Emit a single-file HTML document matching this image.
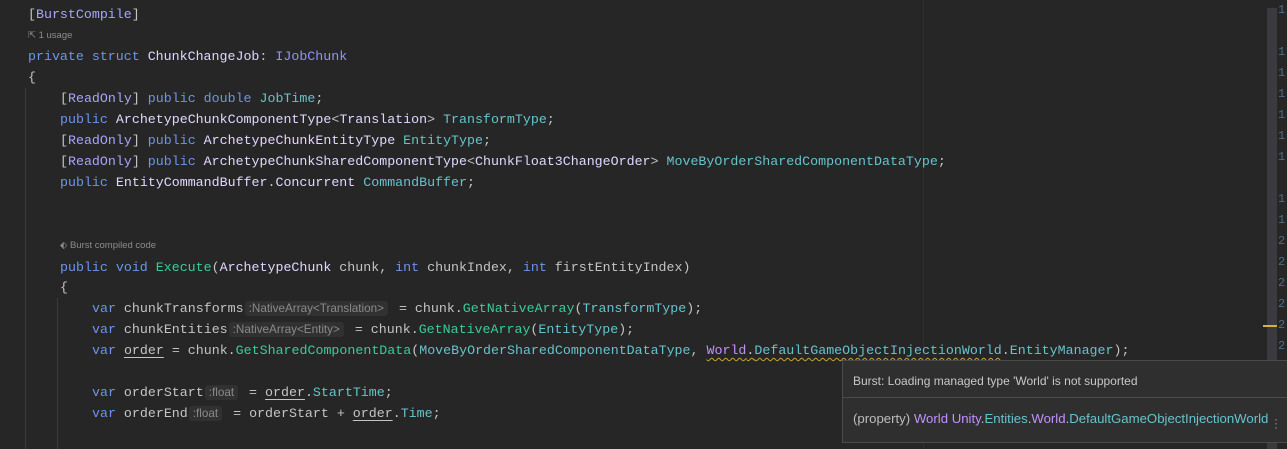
<!DOCTYPE html>
<html><head><style>
body{margin:0;width:1287px;height:449px;background:#262626;overflow:hidden;position:relative;font-family:"Liberation Mono",monospace;font-size:13.3px;color:#c4c4c4}
.l{position:absolute;white-space:pre;height:21px;line-height:21px}
.k{color:#6c95eb}.c{color:#c191ff}.s{color:#e1d6ff}.i{color:#9591ff}.f{color:#66c3cc}.m{color:#39cc9b}.a{color:#a8a5ff}
.u{text-decoration:underline;text-underline-offset:3px}
.h{font-family:"Liberation Sans",sans-serif;font-size:11.7px;color:#8a8a8a;background:#313131;border-radius:3px;padding:1px 4px;margin:0 3px 0 1px}
.cv{position:absolute;font-family:"Liberation Sans",sans-serif;font-size:9.5px;color:#8c8c8c}
.g{position:absolute;width:1px;background:#3a3a3a}
.w{text-decoration:underline wavy #c9a43a;text-underline-offset:3px;text-decoration-thickness:1px}
</style></head><body>
<div class="g" style="left:923px;top:0;height:449px;background:#303030"></div>
<div class="g" style="left:25px;top:88px;height:361px"></div>
<div class="g" style="left:57px;top:298px;height:151px"></div>
<div style="position:absolute;left:1267px;top:8px;width:10px;height:441px;background:#3b3b3f"></div>
<div style="position:absolute;left:1263px;top:325px;width:14px;height:2px;background:#d5b335"></div>
<div style="position:absolute;left:1277px;top:0;width:10px;height:449px;background:#262626"></div>
<div style="position:absolute;left:1278px;top:0;color:#4f6d80;font-size:12px;line-height:21px">1<br><br>1<br>1<br>1<br>1<br>1<br>1<br><br>1<br>1<br>2<br>2<br>2<br>2<br>2<br>2</div>

<div class="l" style="left:28px;top:4px"><span>[</span><span class="a">BurstCompile</span>]</div>
<div class="cv" style="left:28px;top:30px">⇱ 1 usage</div>
<div class="l" style="left:28px;top:46px"><span class="k">private struct</span> <span class="s">ChunkChangeJob</span>: <span class="i">IJobChunk</span></div>
<div class="l" style="left:28px;top:67px">{</div>
<div class="l" style="left:60px;top:88px">[<span class="a">ReadOnly</span>] <span class="k">public double</span> <span class="f">JobTime</span>;</div>
<div class="l" style="left:60px;top:109px"><span class="k">public</span> <span class="s">ArchetypeChunkComponentType</span>&lt;<span class="s">Translation</span>&gt; <span class="f">TransformType</span>;</div>
<div class="l" style="left:60px;top:130px">[<span class="a">ReadOnly</span>] <span class="k">public</span> <span class="s">ArchetypeChunkEntityType</span> <span class="f">EntityType</span>;</div>
<div class="l" style="left:60px;top:151px">[<span class="a">ReadOnly</span>] <span class="k">public</span> <span class="s">ArchetypeChunkSharedComponentType</span>&lt;<span class="s">ChunkFloat3ChangeOrder</span>&gt; <span class="f">MoveByOrderSharedComponentDataType</span>;</div>
<div class="l" style="left:60px;top:172px"><span class="k">public</span> <span class="s">EntityCommandBuffer</span>.<span class="s">Concurrent</span> <span class="f">CommandBuffer</span>;</div>
<div class="cv" style="left:60px;top:240px">⬖ Burst compiled code</div>
<div class="l" style="left:60px;top:257px"><span class="k">public void</span> <span class="m">Execute</span>(<span class="s">ArchetypeChunk</span> chunk, <span class="k">int</span> chunkIndex, <span class="k">int</span> firstEntityIndex)</div>
<div class="l" style="left:60px;top:277px">{</div>
<div class="l" style="left:92px;top:298px"><span class="k">var</span> chunkTransforms<span class="h">:NativeArray&lt;Translation&gt;</span> = chunk.<span class="m">GetNativeArray</span>(<span class="f">TransformType</span>);</div>
<div class="l" style="left:92px;top:319px"><span class="k">var</span> chunkEntities<span class="h">:NativeArray&lt;Entity&gt;</span> = chunk.<span class="m">GetNativeArray</span>(<span class="f">EntityType</span>);</div>
<div class="l" style="left:92px;top:340px"><span class="k">var</span> <span class="u">order</span> = chunk.<span class="m">GetSharedComponentData</span>(<span class="f">MoveByOrderSharedComponentDataType</span>, <span class="c w">World</span><span class="w">.</span><span class="f w">DefaultGameObjectInjectionWorld</span>.<span class="f">EntityManager</span>);</div>
<div class="l" style="left:92px;top:382px"><span class="k">var</span> orderStart<span class="h">:float</span> = <span class="u">order</span>.<span class="f">StartTime</span>;</div>
<div class="l" style="left:92px;top:403px"><span class="k">var</span> orderEnd<span class="h">:float</span> = orderStart + <span class="u">order</span>.<span class="f">Time</span>;</div>

<div style="position:absolute;left:842px;top:360px;width:450px;height:81px;background:#2f2f2f;border:1px solid #4b4b4b;font-family:'Liberation Sans',sans-serif;font-size:12px">
<div style="position:absolute;left:10px;top:13px;color:#c8c8c8">Burst: Loading managed type 'World' is not supported</div>
<div style="position:absolute;left:0;top:36px;width:100%;height:1px;background:#4b4b4b"></div>
<div style="position:absolute;left:10px;top:50px;color:#bdbdbd;font-size:13.2px">(property) <span class="c">World Unity</span>.<span class="f">Entities</span>.<span class="c">World</span>.<span class="f">DefaultGameObjectInjectionWorld</span></div>
<div style="position:absolute;left:431px;top:56px;color:#999;font-size:12px;line-height:4px">·<br>·<br>·</div>
</div>
</body></html>
